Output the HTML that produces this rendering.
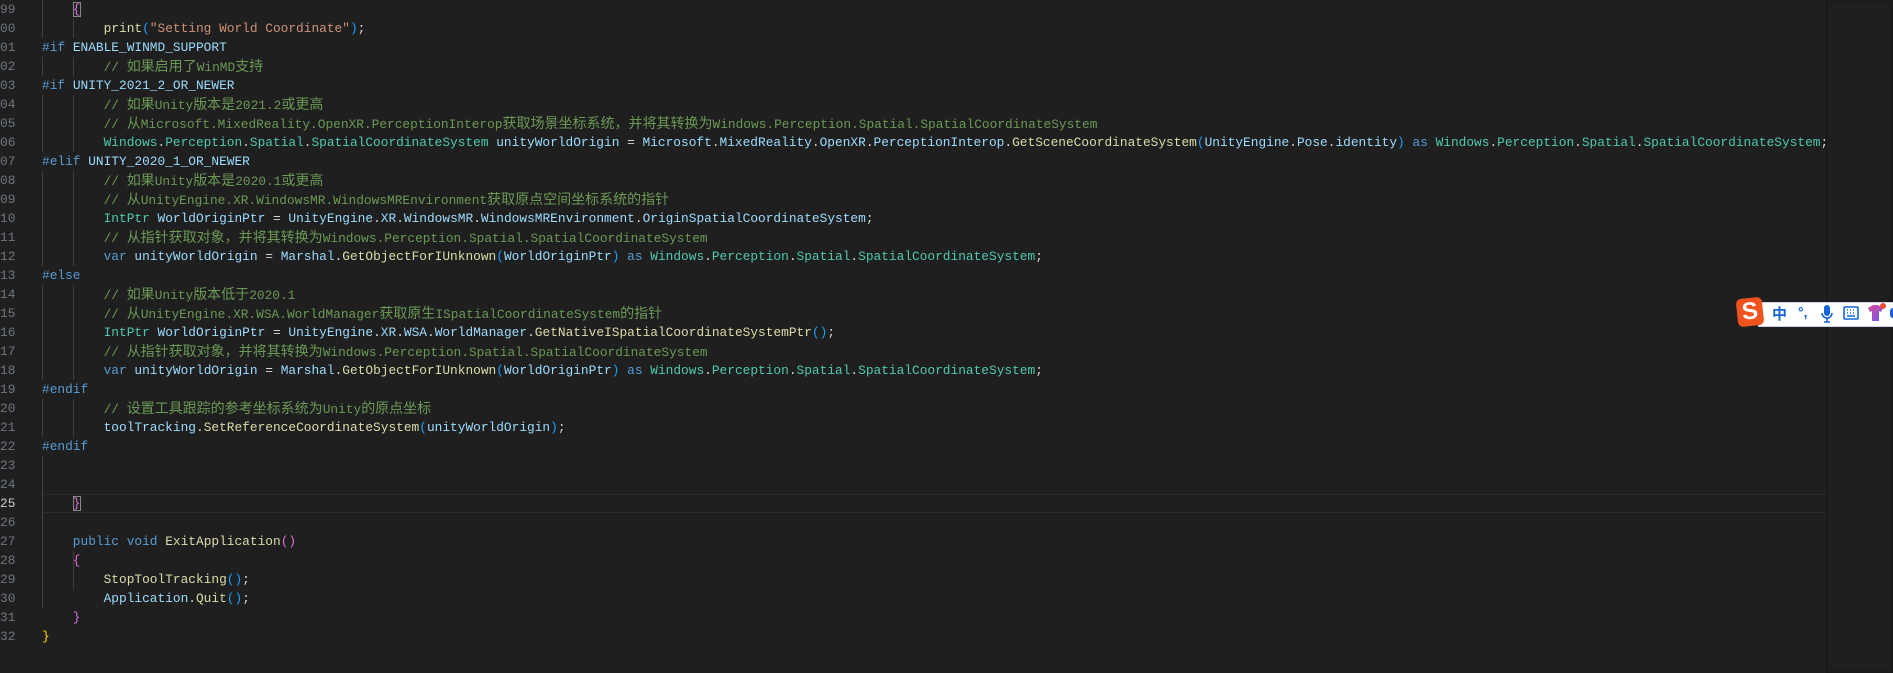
<!DOCTYPE html>
<html><head><meta charset="utf-8"><style>
html,body{margin:0;padding:0;background:#1f1f1f;width:1893px;height:673px;overflow:hidden;position:relative;font-family:"Liberation Mono","Noto Sans CJK SC",monospace;}
.ln{position:absolute;left:0;width:15px;text-align:right;color:#6e7681;font-size:12.83px;line-height:19px;white-space:pre;}
.ln.cur{color:#cccccc;}
.l{position:absolute;left:42px;font-size:12.83px;line-height:19px;white-space:pre;color:#d4d4d4;}
.z{font-family:"Noto Sans CJK SC",sans-serif;font-size:14px;}
.k{color:#569cd6}.t{color:#4ec9b0}.v{color:#9cdcfe}.f{color:#dcdcaa}.c{color:#6a9955}.s{color:#ce9178}
.b1{color:#ffd700}.b2{color:#da70d6}.b3{color:#179fff}
.g{position:absolute;width:1px;background:#404040;}
.box{outline:1px solid #888;outline-offset:-1px}
</style></head><body>
<div style="position:absolute;left:1826px;top:0;width:67px;height:673px;background:#1f1f1f;border-left:1px solid #161616;box-shadow:-2px 0 3px #141414 inset;"></div>
<div style="position:absolute;left:43px;top:494px;width:1783px;height:17px;border-top:1px solid #2c2c2c;border-bottom:1px solid #2c2c2c;"></div>
<div class="g" style="left:42px;top:0;height:38px"></div>
<div class="g" style="left:42px;top:38px;height:0"></div>
<div class="g" style="left:42px;top:57px;height:19px"></div>
<div class="g" style="left:42px;top:95px;height:57px"></div>
<div class="g" style="left:42px;top:171px;height:95px"></div>
<div class="g" style="left:42px;top:285px;height:95px"></div>
<div class="g" style="left:42px;top:399px;height:38px"></div>
<div class="g" style="left:42px;top:456px;height:152px"></div>
<div class="g" style="left:73px;top:19px;height:19px"></div>
<div class="g" style="left:73px;top:57px;height:19px"></div>
<div class="g" style="left:73px;top:95px;height:57px"></div>
<div class="g" style="left:73px;top:171px;height:95px"></div>
<div class="g" style="left:73px;top:285px;height:95px"></div>
<div class="g" style="left:73px;top:399px;height:38px"></div>
<div class="g" style="left:73px;top:551px;height:38px"></div>

<div class="ln" style="top:0">99</div>
<div class="ln" style="top:19px">00</div>
<div class="ln" style="top:38px">01</div>
<div class="ln" style="top:57px">02</div>
<div class="ln" style="top:76px">03</div>
<div class="ln" style="top:95px">04</div>
<div class="ln" style="top:114px">05</div>
<div class="ln" style="top:133px">06</div>
<div class="ln" style="top:152px">07</div>
<div class="ln" style="top:171px">08</div>
<div class="ln" style="top:190px">09</div>
<div class="ln" style="top:209px">10</div>
<div class="ln" style="top:228px">11</div>
<div class="ln" style="top:247px">12</div>
<div class="ln" style="top:266px">13</div>
<div class="ln" style="top:285px">14</div>
<div class="ln" style="top:304px">15</div>
<div class="ln" style="top:323px">16</div>
<div class="ln" style="top:342px">17</div>
<div class="ln" style="top:361px">18</div>
<div class="ln" style="top:380px">19</div>
<div class="ln" style="top:399px">20</div>
<div class="ln" style="top:418px">21</div>
<div class="ln" style="top:437px">22</div>
<div class="ln" style="top:456px">23</div>
<div class="ln" style="top:475px">24</div>
<div class="ln cur" style="top:494px">25</div>
<div class="ln" style="top:513px">26</div>
<div class="ln" style="top:532px">27</div>
<div class="ln" style="top:551px">28</div>
<div class="ln" style="top:570px">29</div>
<div class="ln" style="top:589px">30</div>
<div class="ln" style="top:608px">31</div>
<div class="ln" style="top:627px">32</div>

<div class="l" style="top:0">    <span class="b2 box">{</span></div>
<div class="l" style="top:19px">        <span class="f">print</span><span class="b3">(</span><span class="s">"Setting World Coordinate"</span><span class="b3">)</span>;</div>
<div class="l" style="top:38px"><span class="k">#if</span> <span class="v">ENABLE_WINMD_SUPPORT</span></div>
<div class="l c" style="top:57px">        // <span class="z">如果启用了</span>WinMD<span class="z">支持</span></div>
<div class="l" style="top:76px"><span class="k">#if</span> <span class="v">UNITY_2021_2_OR_NEWER</span></div>
<div class="l c" style="top:95px">        // <span class="z">如果</span>Unity<span class="z">版本是</span>2021.2<span class="z">或更高</span></div>
<div class="l c" style="top:114px">        // <span class="z">从</span>Microsoft.MixedReality.OpenXR.PerceptionInterop<span class="z">获取场景坐标系统，并将其转换为</span>Windows.Perception.Spatial.SpatialCoordinateSystem</div>
<div class="l" style="top:133px">        <span class="t">Windows</span>.<span class="t">Perception</span>.<span class="t">Spatial</span>.<span class="t">SpatialCoordinateSystem</span> <span class="v">unityWorldOrigin</span> = <span class="v">Microsoft</span>.<span class="v">MixedReality</span>.<span class="v">OpenXR</span>.<span class="v">PerceptionInterop</span>.<span class="f">GetSceneCoordinateSystem</span><span class="b3">(</span><span class="v">UnityEngine</span>.<span class="v">Pose</span>.<span class="v">identity</span><span class="b3">)</span> <span class="k">as</span> <span class="t">Windows</span>.<span class="t">Perception</span>.<span class="t">Spatial</span>.<span class="t">SpatialCoordinateSystem</span>;</div>
<div class="l" style="top:152px"><span class="k">#elif</span> <span class="v">UNITY_2020_1_OR_NEWER</span></div>
<div class="l c" style="top:171px">        // <span class="z">如果</span>Unity<span class="z">版本是</span>2020.1<span class="z">或更高</span></div>
<div class="l c" style="top:190px">        // <span class="z">从</span>UnityEngine.XR.WindowsMR.WindowsMREnvironment<span class="z">获取原点空间坐标系统的指针</span></div>
<div class="l" style="top:209px">        <span class="t">IntPtr</span> <span class="v">WorldOriginPtr</span> = <span class="v">UnityEngine</span>.<span class="v">XR</span>.<span class="v">WindowsMR</span>.<span class="v">WindowsMREnvironment</span>.<span class="v">OriginSpatialCoordinateSystem</span>;</div>
<div class="l c" style="top:228px">        // <span class="z">从指针获取对象，并将其转换为</span>Windows.Perception.Spatial.SpatialCoordinateSystem</div>
<div class="l" style="top:247px">        <span class="k">var</span> <span class="v">unityWorldOrigin</span> = <span class="v">Marshal</span>.<span class="f">GetObjectForIUnknown</span><span class="b3">(</span><span class="v">WorldOriginPtr</span><span class="b3">)</span> <span class="k">as</span> <span class="t">Windows</span>.<span class="t">Perception</span>.<span class="t">Spatial</span>.<span class="t">SpatialCoordinateSystem</span>;</div>
<div class="l" style="top:266px"><span class="k">#else</span></div>
<div class="l c" style="top:285px">        // <span class="z">如果</span>Unity<span class="z">版本低于</span>2020.1</div>
<div class="l c" style="top:304px">        // <span class="z">从</span>UnityEngine.XR.WSA.WorldManager<span class="z">获取原生</span>ISpatialCoordinateSystem<span class="z">的指针</span></div>
<div class="l" style="top:323px">        <span class="t">IntPtr</span> <span class="v">WorldOriginPtr</span> = <span class="v">UnityEngine</span>.<span class="v">XR</span>.<span class="v">WSA</span>.<span class="v">WorldManager</span>.<span class="f">GetNativeISpatialCoordinateSystemPtr</span><span class="b3">()</span>;</div>
<div class="l c" style="top:342px">        // <span class="z">从指针获取对象，并将其转换为</span>Windows.Perception.Spatial.SpatialCoordinateSystem</div>
<div class="l" style="top:361px">        <span class="k">var</span> <span class="v">unityWorldOrigin</span> = <span class="v">Marshal</span>.<span class="f">GetObjectForIUnknown</span><span class="b3">(</span><span class="v">WorldOriginPtr</span><span class="b3">)</span> <span class="k">as</span> <span class="t">Windows</span>.<span class="t">Perception</span>.<span class="t">Spatial</span>.<span class="t">SpatialCoordinateSystem</span>;</div>
<div class="l" style="top:380px"><span class="k">#endif</span></div>
<div class="l c" style="top:399px">        // <span class="z">设置工具跟踪的参考坐标系统为</span>Unity<span class="z">的原点坐标</span></div>
<div class="l" style="top:418px">        <span class="v">toolTracking</span>.<span class="f">SetReferenceCoordinateSystem</span><span class="b3">(</span><span class="v">unityWorldOrigin</span><span class="b3">)</span>;</div>
<div class="l" style="top:437px"><span class="k">#endif</span></div>
<div class="l" style="top:494px">    <span class="b2 box">}</span></div>
<div class="l" style="top:532px">    <span class="k">public</span> <span class="k">void</span> <span class="f">ExitApplication</span><span class="b2">()</span></div>
<div class="l" style="top:551px">    <span class="b2">{</span></div>
<div class="l" style="top:570px">        <span class="f">StopToolTracking</span><span class="b3">()</span>;</div>
<div class="l" style="top:589px">        <span class="v">Application</span>.<span class="f">Quit</span><span class="b3">()</span>;</div>
<div class="l" style="top:608px">    <span class="b2">}</span></div>
<div class="l" style="top:627px"><span class="b1">}</span></div>

<div style="position:absolute;left:1758px;top:302px;width:140px;height:23px;background:#fff;border:1px solid #c8d4e8;"></div>
<div style="position:absolute;left:1737px;top:298px;width:26px;height:28px;background:#f0541e;border-radius:5px;transform:rotate(-6deg);color:#fff;font:bold 24px/28px 'Liberation Sans',sans-serif;text-align:center;">S</div>
<div style="position:absolute;left:1772px;top:304px;color:#1565d8;font:bold 15px/20px 'Noto Sans CJK SC',sans-serif;">中</div>
<div style="position:absolute;left:1798px;top:302px;color:#1565d8;font:bold 14px/20px 'Liberation Sans',sans-serif;">°,</div>
<svg style="position:absolute;left:1820px;top:304px" width="14" height="20" viewBox="0 0 14 20"><rect x="4" y="1" width="6" height="11" rx="3" fill="#1565d8"/><path d="M2 9a5 5 0 0 0 10 0M7 14v4M4 18h6" stroke="#1565d8" stroke-width="1.6" fill="none"/></svg>
<svg style="position:absolute;left:1843px;top:306px" width="16" height="14" viewBox="0 0 16 14"><rect x="1" y="1" width="14" height="12" rx="1" stroke="#1565d8" stroke-width="1.6" fill="none"/><path d="M4 4h1M7 4h1M10 4h1M4 7h1M7 7h1M10 7h1M4 10h8" stroke="#1565d8" stroke-width="1.5"/></svg>
<svg style="position:absolute;left:1866px;top:302px" width="20" height="22" viewBox="0 0 20 22"><defs><linearGradient id="gr" x1="0" y1="0" x2="1" y2="1"><stop offset="0" stop-color="#e2458f"/><stop offset="1" stop-color="#6a5cf5"/></linearGradient></defs><path d="M2 6l5-3h5l5 3-2 4-2-1v10H6V9L4 10z" fill="url(#gr)"/><circle cx="17" cy="4" r="3" fill="#f04a32"/></svg>
<div style="position:absolute;left:1890px;top:308px;width:6px;height:10px;border-radius:3px;background:#1565d8;"></div>
</body></html>
